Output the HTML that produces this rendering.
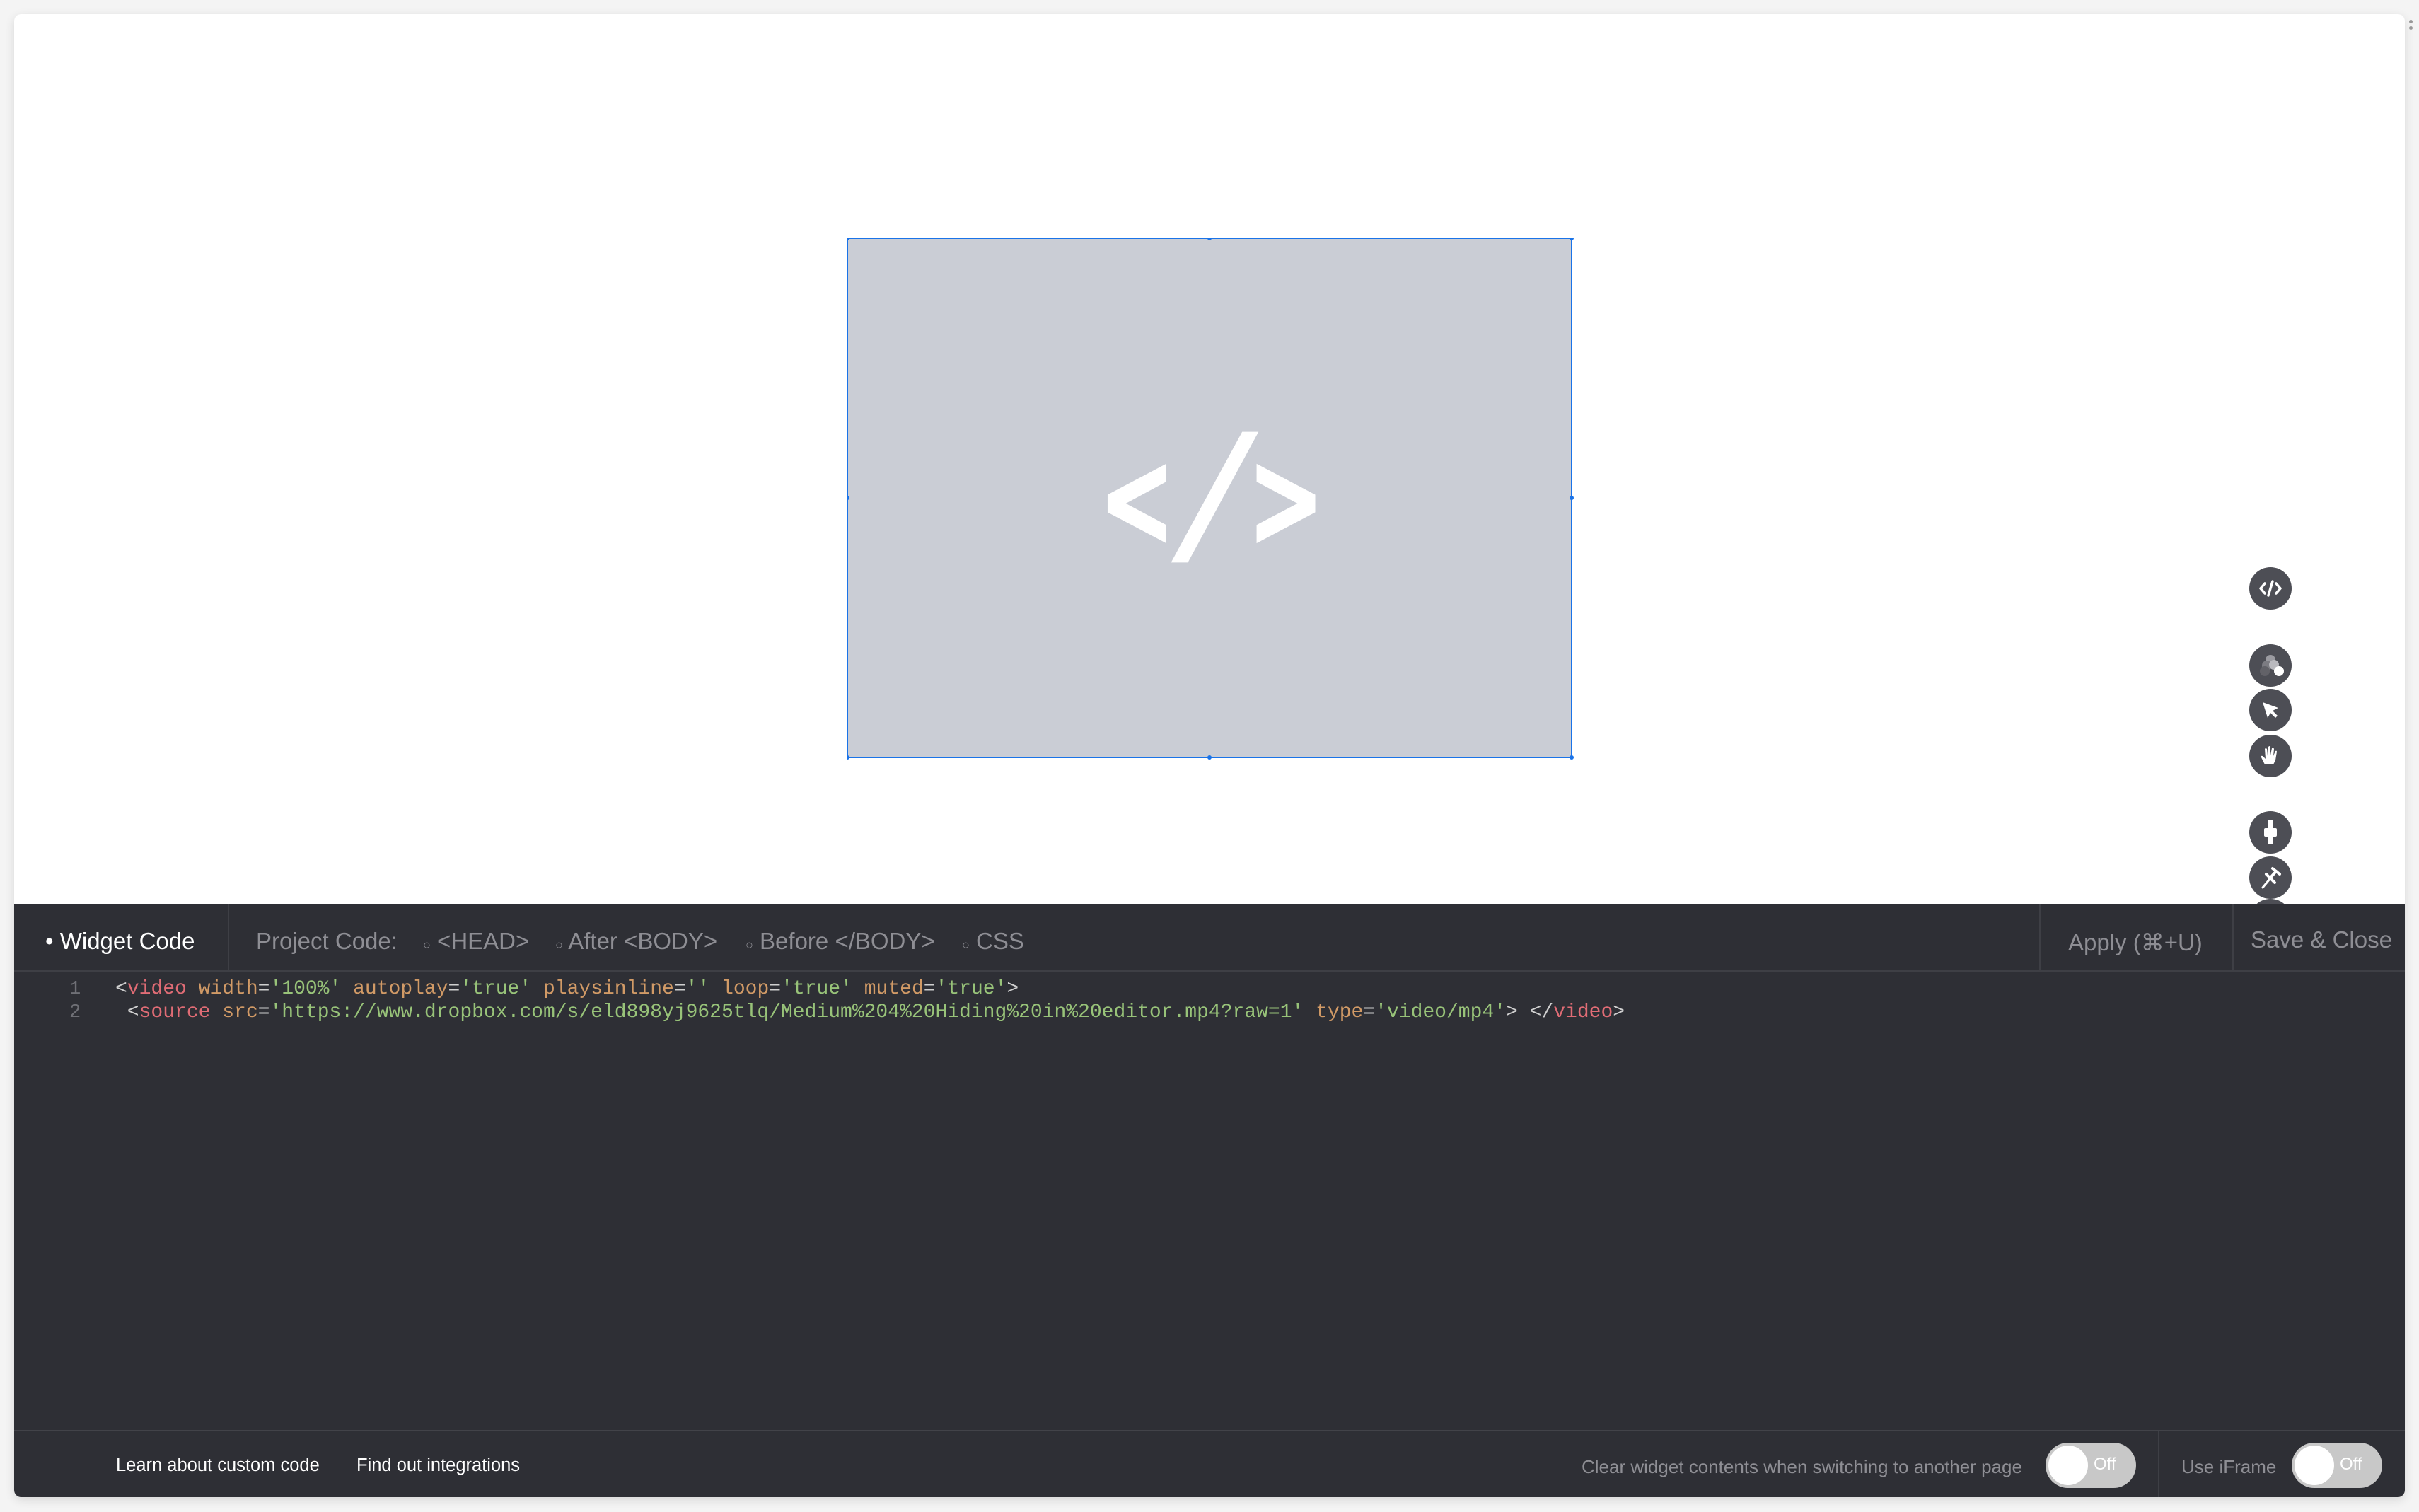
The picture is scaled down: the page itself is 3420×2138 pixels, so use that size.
<!DOCTYPE html>
<html><head><meta charset="utf-8"><style>
*{margin:0;padding:0;box-sizing:border-box}
body{width:3420px;height:2138px;background:#f4f4f4;position:relative;overflow:hidden;font-family:"Liberation Sans",sans-serif}
#panel{position:absolute;left:20px;top:20px;width:3380px;height:2097px;background:#fff;border-radius:10px;overflow:hidden;box-shadow:0 4px 14px rgba(0,0,0,.12)}
.abs{position:absolute}
#dark{position:absolute;left:0;top:1258px;width:3380px;height:839px;background:#2e2f35}
.t{position:absolute;white-space:nowrap}
.tab{color:#8e8e94;font-size:33px;top:34px}
.vl{position:absolute;width:2px;background:#3e3f45}
.code{font-family:"Liberation Mono","DejaVu Sans Mono",monospace;font-size:28px;color:#cfcfcf;position:absolute;white-space:pre}
.tg{color:#e06c75}.at{color:#d19a66}.st{color:#98c379}
.ln{font-family:"Liberation Mono",monospace;font-size:27px;color:#6f7076;position:absolute}
.btn{position:absolute;left:3160px;width:60px;height:60px;border-radius:50%;background:#4d4e55}
.tog{position:absolute;width:128px;height:64px;border-radius:32px;background:#c8c8c8}
.tog::before{content:"";position:absolute;left:4px;top:4px;width:56px;height:56px;border-radius:50%;background:#fff}
.tog span{position:absolute;left:68px;top:17px;font-size:24px;color:#fff}
</style></head><body>
<div id="panel">
 <svg class="abs" style="left:1177px;top:316px" width="1030" height="740">
  <rect x="1" y="1" width="1024" height="734" fill="#cacdd5" stroke="#1a73e8" stroke-width="2"/>
  <g fill="#1a73e8"><circle cx="1" cy="1" r="3"/><circle cx="513" cy="1" r="3"/><circle cx="1025" cy="1" r="3"/><circle cx="1" cy="368" r="3"/><circle cx="1025" cy="368" r="3"/><circle cx="1" cy="735" r="3"/><circle cx="513" cy="735" r="3"/><circle cx="1025" cy="735" r="3"/></g>
 </svg>
 <svg class="abs" style="left:1160px;top:296px" width="1060" height="770" viewBox="0 0 1560 1550" preserveAspectRatio="none">
  <g fill="#fff">
   <polygon points="568,772 690,684 690,735 606,797 690,858 690,910 568,822"/>
   <polygon points="848,593 882,593 735,965 700,965"/>
   <polygon points="878,684 1000,772 1000,822 878,910 878,858 963,797 878,735"/>
  </g>
 </svg>
 <div class="btn" style="top:782px"><svg width="60" height="60"><g stroke="#fff" stroke-width="3.5" fill="none" stroke-linecap="round" stroke-linejoin="round"><path d="M22 23 L16 30 L22 37"/><path d="M38 23 L44 30 L38 37"/><path d="M33 20 L27 40"/></g></svg></div>
 <div class="btn" style="top:891px"><svg width="60" height="60"><circle cx="30" cy="22" r="7" fill="#9a9aa0"/><circle cx="25" cy="30" r="7" fill="#7c7c82"/><circle cx="35" cy="29" r="7" fill="#b9b9be"/><circle cx="22" cy="38" r="7" fill="#626268"/><circle cx="42" cy="38" r="7" fill="#fff"/></svg></div>
 <div class="btn" style="top:954px"><svg width="60" height="60"><path d="M19 19 L41 27 L33 31 L40 38 L37 41 L30 34 L26 41 Z" fill="#fff"/></svg></div>
 <div class="btn" style="top:1019px"><svg width="60" height="60"><path d="M22 42 L17 32 Q16 29 19 30 L23 34 L22 20 Q23 18 25 20 L26 30 L27 17 Q29 15 30 17 L30 29 L32 19 Q34 17 35 20 L34 30 L37 23 Q39 22 39 24 L37 36 L34 42 Z" fill="#fff"/></svg></div>
 <div class="btn" style="top:1127px"><svg width="60" height="60"><rect x="27" y="13" width="6" height="34" fill="#fff"/><rect x="21" y="24" width="18" height="12" rx="2" fill="#fff"/></svg></div>
 <div class="btn" style="top:1191px"><svg width="60" height="60"><g stroke="#fff" stroke-width="4" stroke-linecap="round"><path d="M33 17 L43 25"/><path d="M38 21 L29 31"/><path d="M24 25 L36 37"/><path d="M29 32 L19 44" stroke-width="3"/></g></svg></div>
 <div class="btn" style="top:1251px"></div>

 <div id="dark">
  <div class="t" style="left:44px;top:34px;color:#fff;font-size:33px">• Widget Code</div>
  <div class="vl" style="left:302px;top:0;height:94px"></div>
  <div class="t tab" style="left:342px">Project Code:</div>
  <div class="t tab" style="left:578px"><span style="font-size:18px">○</span> &lt;HEAD&gt;</div>
  <div class="t tab" style="left:765px"><span style="font-size:18px">○</span> After &lt;BODY&gt;</div>
  <div class="t tab" style="left:1034px"><span style="font-size:18px">○</span> Before &lt;/BODY&gt;</div>
  <div class="t tab" style="left:1340px"><span style="font-size:18px">○</span> CSS</div>
  <div class="vl" style="left:2863px;top:0;height:94px"></div>
  <div class="t tab" style="left:2904px;top:35px">Apply (⌘+U)</div>
  <div class="vl" style="left:3136px;top:0;height:94px"></div>
  <div class="t tab" style="left:3162px;top:32px">Save &amp; Close</div>
  <div class="abs" style="left:0;top:94px;width:3380px;height:2px;background:#3e3f45"></div>
  <div class="ln" style="left:78px;top:106px">1</div>
  <div class="ln" style="left:78px;top:139px">2</div>
  <div class="code" style="left:143px;top:105px">&lt;<span class="tg">video</span> <span class="at">width</span>=<span class="st">'100%'</span> <span class="at">autoplay</span>=<span class="st">'true'</span> <span class="at">playsinline</span>=<span class="st">''</span> <span class="at">loop</span>=<span class="st">'true'</span> <span class="at">muted</span>=<span class="st">'true'</span>&gt;</div>
  <div class="code" style="left:143px;top:138px"> &lt;<span class="tg">source</span> <span class="at">src</span>=<span class="st">'https://www.dropbox.com/s/eld898yj9625tlq/Medium%204%20Hiding%20in%20editor.mp4?raw=1'</span> <span class="at">type</span>=<span class="st">'video/mp4'</span>&gt; &lt;/<span class="tg">video</span>&gt;</div>
  <div class="abs" style="left:0;top:744px;width:3380px;height:2px;background:#424349"></div>
  <div class="t" style="left:144px;top:780px;color:#fff;font-size:25.5px">Learn about custom code</div>
  <div class="t" style="left:484px;top:780px;color:#fff;font-size:25.5px">Find out integrations</div>
  <div class="t" style="left:2216px;top:781px;color:#8e8e94;font-size:26px">Clear widget contents when switching to another page</div>
  <div class="tog" style="left:2872px;top:762px"><span>Off</span></div>
  <div class="vl" style="left:3031px;top:746px;height:93px"></div>
  <div class="t" style="left:3064px;top:781px;color:#8e8e94;font-size:26px">Use iFrame</div>
  <div class="tog" style="left:3220px;top:762px"><span>Off</span></div>
 </div>
</div>
<div class="abs" style="left:3406px;top:28px;width:5px;height:5px;border-radius:50%;background:#999;box-shadow:0 9px 0 #999"></div>
</body></html>
